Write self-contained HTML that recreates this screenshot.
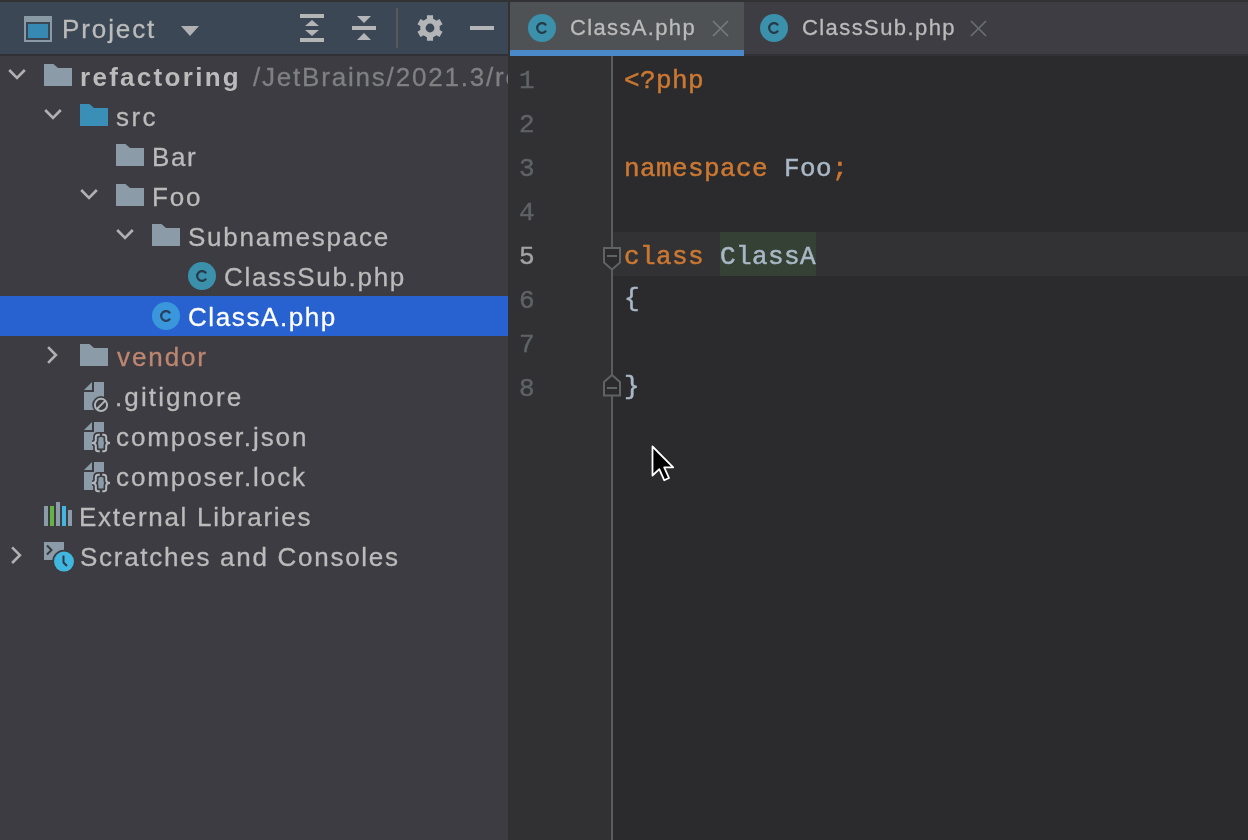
<!DOCTYPE html>
<html><head><meta charset="utf-8"><title>PhpStorm</title>
<style>
html,body{margin:0;padding:0;background:#2b2b2d;}
body{width:1248px;height:840px;position:relative;overflow:hidden;font-family:"Liberation Sans",sans-serif;}
.a,.t{position:absolute;}
.t{white-space:pre;will-change:transform;}
svg{position:absolute;overflow:visible;}
</style></head><body>

<div class="a" style="left:0;top:0;width:1248px;height:2px;background:#323234"></div>
<div class="a" style="left:0;top:2px;width:508px;height:52px;background:#3b4754"></div>
<div class="a" style="left:0;top:54px;width:508px;height:2px;background:#313135"></div>
<div class="a" style="left:0;top:56px;width:508px;height:784px;background:#3d3c42"></div>
<div class="a" style="left:508px;top:2px;width:2px;height:54px;background:#323235"></div>
<div class="a" style="left:510px;top:2px;width:738px;height:52px;background:#3e3d43"></div>
<div class="a" style="left:510px;top:54px;width:738px;height:2px;background:#323236"></div>
<div class="a" style="left:510px;top:2px;width:234px;height:48px;background:#4e5254"></div>
<div class="a" style="left:510px;top:50px;width:234px;height:6px;background:#4a88c7"></div>
<div class="a" style="left:508px;top:56px;width:103px;height:784px;background:#313134"></div>
<div class="a" style="left:613px;top:56px;width:635px;height:784px;background:#2b2b2d"></div>
<div class="a" style="left:613px;top:232px;width:635px;height:44px;background:#323234"></div>
<div class="a" style="left:720px;top:232px;width:96px;height:44px;background:#344134"></div>
<div class="a" style="left:611px;top:56px;width:2px;height:784px;background:#5a5d5e"></div>
<div class="a" style="left:0;top:296px;width:508px;height:40px;background:#2762d0"></div>
<svg style="left:0;top:0" width="508" height="56" viewBox="0 0 508 56">
<rect x="24" y="16" width="28" height="26" fill="#8a9aa5"/><rect x="26" y="22" width="24" height="18" fill="#3b4553"/><rect x="28" y="24" width="20" height="14" fill="#3689b3"/>
<path d="M181 26H199L190 36Z" fill="#afb1b3"/>
<g fill="#b4b5b6"><rect x="300" y="14" width="24" height="4"/><rect x="300" y="38" width="24" height="4"/><path d="M312 20L319 26H305Z"/><path d="M305 30H319L312 36Z"/>
<rect x="352" y="26" width="24" height="4"/><path d="M357 16H371L364 23Z"/><path d="M364 33L371 40H357Z"/>
<rect x="470" y="26" width="24" height="4"/></g>
<rect x="396" y="8" width="2" height="40" fill="#5b5954"/>
<circle cx="430" cy="28" r="9.7" fill="#b4b5b6"/><path d="M433.09 19.02L433.06 15.26L426.94 15.26L426.91 19.02L423.77 20.83L420.50 18.98L417.44 24.28L420.67 26.19L420.67 29.81L417.44 31.72L420.50 37.02L423.77 35.17L426.91 36.98L426.94 40.74L433.06 40.74L433.09 36.98L436.23 35.17L439.50 37.02L442.56 31.72L439.33 29.81L439.33 26.19L442.56 24.28L439.50 18.98L436.23 20.83ZM434.4 28A4.4 4.4 0 1 0 425.6 28A4.4 4.4 0 1 0 434.4 28Z" fill="#b4b5b6" fill-rule="evenodd"/><circle cx="430" cy="28" r="4.4" fill="#3b4754"/>
</svg>
<div class="t" style="left:61.67px;top:8.69px;font:26px/40px 'Liberation Sans',sans-serif;letter-spacing:1.901px;color:#bbbbbb;-webkit-text-stroke:0.3px #bbbbbb;">Project</div>
<svg style="left:0;top:0" width="508" height="840" viewBox="0 0 508 840">
<path d="M9.2 70L17 77.8L24.8 70" fill="none" stroke="#b0b1b3" stroke-width="2.6"/>
<path d="M44 86H72V68H58L53.5 64H44Z" fill="#8b9ba7"/>
<path d="M45.2 110L53 117.8L60.8 110" fill="none" stroke="#b0b1b3" stroke-width="2.6"/>
<path d="M80 126H108V108H94L89.5 104H80Z" fill="#3a8fb7"/>
<path d="M116 166H144V148H130L125.5 144H116Z" fill="#8b9ba7"/>
<path d="M81.2 190L89 197.8L96.8 190" fill="none" stroke="#b0b1b3" stroke-width="2.6"/>
<path d="M116 206H144V188H130L125.5 184H116Z" fill="#8b9ba7"/>
<path d="M117.2 230L125 237.8L132.8 230" fill="none" stroke="#b0b1b3" stroke-width="2.6"/>
<path d="M152 246H180V228H166L161.5 224H152Z" fill="#8b9ba7"/>
<circle cx="202" cy="276" r="14" fill="#3b90ab"/><path d="M206.07 273.36A4.85 4.85 0 1 0 206.07 278.64" fill="none" stroke="#263a46" stroke-width="2.2"/>
<circle cx="166" cy="316" r="14" fill="#3a97dc"/><path d="M170.07 313.36A4.85 4.85 0 1 0 170.07 318.64" fill="none" stroke="#27405c" stroke-width="2.2"/>
<path d="M48.1 347.2L55.900000000000006 355L48.1 362.8" fill="none" stroke="#b0b1b3" stroke-width="2.6"/>
<path d="M80 366H108V348H94L89.5 344H80Z" fill="#8b9ba7"/>
<path d="M92 382V390H84Z" fill="#8b9ba7"/><path d="M94 382H104V410H84V392H94Z" fill="#8b9ba7"/>
<circle cx="101" cy="404.9" r="8.8" fill="#3d3c42"/><circle cx="101" cy="404.9" r="6.1" fill="#39383e" stroke="#aeb5bb" stroke-width="2"/><path d="M96.7 409.2L105.3 400.6" stroke="#aeb5bb" stroke-width="2"/>
<path d="M92 422V430H84Z" fill="#8b9ba7"/><path d="M94 422H104V450H84V432H94Z" fill="#8b9ba7"/>
<rect x="99.3" y="432" width="3.4" height="5" fill="#3d3c42"/><rect x="99.3" y="448.5" width="3.4" height="2" fill="#3d3c42"/><g fill="none" stroke-linecap="butt"><path d="M99.8 434.7h-1.5q-2.5 0 -2.5 2.5v3q0 2.8 -3.8 2.8q3.8 0 3.8 2.8v3q0 2.5 2.5 2.5h1.5" stroke="#3d3c42" stroke-width="5.4"/><path d="M102.2 434.7h1.5q2.5 0 2.5 2.5v3q0 2.8 3.8 2.8q-3.8 0 -3.8 2.8v3q0 2.5 -2.5 2.5h-1.5" stroke="#3d3c42" stroke-width="5.4"/><path d="M99.8 434.7h-1.5q-2.5 0 -2.5 2.5v3q0 2.8 -3.8 2.8q3.8 0 3.8 2.8v3q0 2.5 2.5 2.5h1.5" stroke="#b0b8be" stroke-width="2"/><path d="M102.2 434.7h1.5q2.5 0 2.5 2.5v3q0 2.8 3.8 2.8q-3.8 0 -3.8 2.8v3q0 2.5 -2.5 2.5h-1.5" stroke="#b0b8be" stroke-width="2"/></g>
<path d="M92 462V470H84Z" fill="#8b9ba7"/><path d="M94 462H104V490H84V472H94Z" fill="#8b9ba7"/>
<rect x="99.3" y="472" width="3.4" height="5" fill="#3d3c42"/><rect x="99.3" y="488.5" width="3.4" height="2" fill="#3d3c42"/><g fill="none" stroke-linecap="butt"><path d="M99.8 474.7h-1.5q-2.5 0 -2.5 2.5v3q0 2.8 -3.8 2.8q3.8 0 3.8 2.8v3q0 2.5 2.5 2.5h1.5" stroke="#3d3c42" stroke-width="5.4"/><path d="M102.2 474.7h1.5q2.5 0 2.5 2.5v3q0 2.8 3.8 2.8q-3.8 0 -3.8 2.8v3q0 2.5 -2.5 2.5h-1.5" stroke="#3d3c42" stroke-width="5.4"/><path d="M99.8 474.7h-1.5q-2.5 0 -2.5 2.5v3q0 2.8 -3.8 2.8q3.8 0 3.8 2.8v3q0 2.5 2.5 2.5h1.5" stroke="#b0b8be" stroke-width="2"/><path d="M102.2 474.7h1.5q2.5 0 2.5 2.5v3q0 2.8 3.8 2.8q-3.8 0 -3.8 2.8v3q0 2.5 -2.5 2.5h-1.5" stroke="#b0b8be" stroke-width="2"/></g>
<rect x="44" y="506" width="4" height="20" fill="#8b9ba7"/>
<rect x="50" y="506" width="4" height="20" fill="#62b543"/>
<rect x="56" y="502" width="4" height="24" fill="#8b9ba7"/>
<rect x="62" y="506" width="4" height="20" fill="#40b6e0"/>
<rect x="68" y="510" width="4" height="16" fill="#8b9ba7"/>
<path d="M12.1 547.4000000000001L19.9 555.2L12.1 563.0" fill="none" stroke="#b0b1b3" stroke-width="2.6"/>
<rect x="44" y="542" width="20" height="18" fill="#8b9ba7"/><path d="M47 545.5L51.5 550L47 554.5" fill="none" stroke="#35393d" stroke-width="2"/>
<circle cx="64" cy="561.6" r="11.8" fill="#3d3c42"/><circle cx="64" cy="561.6" r="10" fill="#40b6e0"/><path d="M63.5 555.5V562.5L67 566" fill="none" stroke="#2d3a44" stroke-width="2"/>
</svg>
<div class="t" style="left:79.54px;top:56.79px;font:26px/40px 'Liberation Sans',sans-serif;font-weight:bold;letter-spacing:2.290px;color:#bbbbbb;-webkit-text-stroke:0px #bbbbbb;">refactoring</div>
<div class="a" style="left:0;top:56px;width:508px;height:40px;overflow:hidden"><div class="t" style="left:253.20px;top:0.79px;font:26px/40px 'Liberation Sans',sans-serif;letter-spacing:1.800px;color:#7e8083;-webkit-text-stroke:0.3px #7e8083;">/JetBrains/2021.3/refactoring</div></div>
<div class="t" style="left:116.28px;top:96.79px;font:26px/40px 'Liberation Sans',sans-serif;letter-spacing:2.475px;color:#bbbbbb;-webkit-text-stroke:0.3px #bbbbbb;">src</div>
<div class="t" style="left:151.62px;top:136.79px;font:26px/40px 'Liberation Sans',sans-serif;letter-spacing:1.577px;color:#bbbbbb;-webkit-text-stroke:0.3px #bbbbbb;">Bar</div>
<div class="t" style="left:151.57px;top:176.79px;font:26px/40px 'Liberation Sans',sans-serif;letter-spacing:1.861px;color:#bbbbbb;-webkit-text-stroke:0.3px #bbbbbb;">Foo</div>
<div class="t" style="left:187.82px;top:216.79px;font:26px/40px 'Liberation Sans',sans-serif;letter-spacing:1.769px;color:#bbbbbb;-webkit-text-stroke:0.3px #bbbbbb;">Subnamespace</div>
<div class="t" style="left:223.68px;top:256.79px;font:26px/40px 'Liberation Sans',sans-serif;letter-spacing:1.667px;color:#bbbbbb;-webkit-text-stroke:0.3px #bbbbbb;">ClassSub.php</div>
<div class="t" style="left:188.28px;top:296.79px;font:26px/40px 'Liberation Sans',sans-serif;letter-spacing:1.595px;color:#ffffff;-webkit-text-stroke:0.3px #ffffff;">ClassA.php</div>
<div class="t" style="left:116.91px;top:336.79px;font:26px/40px 'Liberation Sans',sans-serif;letter-spacing:1.904px;color:#be8670;-webkit-text-stroke:0.3px #be8670;">vendor</div>
<div class="t" style="left:115.33px;top:376.79px;font:26px/40px 'Liberation Sans',sans-serif;letter-spacing:2.130px;color:#bbbbbb;-webkit-text-stroke:0.3px #bbbbbb;">.gitignore</div>
<div class="t" style="left:115.90px;top:416.79px;font:26px/40px 'Liberation Sans',sans-serif;letter-spacing:1.893px;color:#bbbbbb;-webkit-text-stroke:0.3px #bbbbbb;">composer.json</div>
<div class="t" style="left:115.90px;top:456.79px;font:26px/40px 'Liberation Sans',sans-serif;letter-spacing:1.904px;color:#bbbbbb;-webkit-text-stroke:0.3px #bbbbbb;">composer.lock</div>
<div class="t" style="left:79.27px;top:496.79px;font:26px/40px 'Liberation Sans',sans-serif;letter-spacing:1.715px;color:#bbbbbb;-webkit-text-stroke:0.3px #bbbbbb;">External Libraries</div>
<div class="t" style="left:80.22px;top:536.79px;font:26px/40px 'Liberation Sans',sans-serif;letter-spacing:1.724px;color:#bbbbbb;-webkit-text-stroke:0.3px #bbbbbb;">Scratches and Consoles</div>
<svg style="left:510px;top:0" width="738" height="56" viewBox="510 0 738 56">
<circle cx="542" cy="28" r="14" fill="#3b90ab"/><path d="M546.07 25.36A4.85 4.85 0 1 0 546.07 30.64" fill="none" stroke="#263a46" stroke-width="2.2"/>
<circle cx="774" cy="28" r="14" fill="#3b90ab"/><path d="M778.07 25.36A4.85 4.85 0 1 0 778.07 30.64" fill="none" stroke="#263a46" stroke-width="2.2"/>
<path d="M713 21L728 36M728 21L713 36" stroke="#777b7e" stroke-width="1.6" fill="none"/>
<path d="M971 21L986 36M986 21L971 36" stroke="#6b6e73" stroke-width="1.6" fill="none"/>
</svg>
<div class="t" style="left:570.38px;top:8.07px;font:22px/40px 'Liberation Sans',sans-serif;letter-spacing:1.349px;color:#bbbbbb;-webkit-text-stroke:0.3px #bbbbbb;">ClassA.php</div>
<div class="t" style="left:801.88px;top:8.07px;font:22px/40px 'Liberation Sans',sans-serif;letter-spacing:1.415px;color:#bbbbbb;-webkit-text-stroke:0.3px #bbbbbb;">ClassSub.php</div>
<div class="t" style="left:624.20px;top:58.78px;font:26px/44px 'Liberation Mono',monospace;letter-spacing:0.40px;-webkit-text-stroke:0.5px currentColor"><span style="color:#cc7832">&lt;?php</span></div>
<div class="t" style="left:624.20px;top:146.78px;font:26px/44px 'Liberation Mono',monospace;letter-spacing:0.40px;-webkit-text-stroke:0.5px currentColor"><span style="color:#cc7832">namespace </span><span style="color:#a9b7c6">Foo</span><span style="color:#cc7832">;</span></div>
<div class="t" style="left:624.20px;top:234.78px;font:26px/44px 'Liberation Mono',monospace;letter-spacing:0.40px;-webkit-text-stroke:0.5px currentColor"><span style="color:#cc7832">class </span><span style="color:#a9b7c6">ClassA</span></div>
<div class="t" style="left:624.20px;top:278.78px;font:26px/44px 'Liberation Mono',monospace;letter-spacing:0.40px;-webkit-text-stroke:0.5px currentColor"><span style="color:#a9b7c6;position:relative;top:-2.4px">{</span></div>
<div class="t" style="left:624.20px;top:366.78px;font:26px/44px 'Liberation Mono',monospace;letter-spacing:0.40px;-webkit-text-stroke:0.5px currentColor"><span style="color:#a9b7c6;position:relative;top:-2.4px">}</span></div>
<div class="t" style="left:519.4px;top:58.78px;font:26px/44px 'Liberation Mono',monospace;color:#606366;-webkit-text-stroke:0.4px #606366">1</div>
<div class="t" style="left:519.4px;top:102.78px;font:26px/44px 'Liberation Mono',monospace;color:#606366;-webkit-text-stroke:0.4px #606366">2</div>
<div class="t" style="left:519.4px;top:146.78px;font:26px/44px 'Liberation Mono',monospace;color:#606366;-webkit-text-stroke:0.4px #606366">3</div>
<div class="t" style="left:519.4px;top:190.78px;font:26px/44px 'Liberation Mono',monospace;color:#606366;-webkit-text-stroke:0.4px #606366">4</div>
<div class="t" style="left:519.4px;top:234.78px;font:26px/44px 'Liberation Mono',monospace;color:#a4a3a3;-webkit-text-stroke:0.4px #a4a3a3">5</div>
<div class="t" style="left:519.4px;top:278.78px;font:26px/44px 'Liberation Mono',monospace;color:#606366;-webkit-text-stroke:0.4px #606366">6</div>
<div class="t" style="left:519.4px;top:322.78px;font:26px/44px 'Liberation Mono',monospace;color:#606366;-webkit-text-stroke:0.4px #606366">7</div>
<div class="t" style="left:519.4px;top:366.78px;font:26px/44px 'Liberation Mono',monospace;color:#606366;-webkit-text-stroke:0.4px #606366">8</div>
<svg style="left:508px;top:56px" width="740" height="784" viewBox="508 56 740 784">
<path d="M604 248H620V262.5L612 269.5L604 262.5Z" fill="#2b2b2d" stroke="#606364" stroke-width="2"/><rect x="607" y="255" width="10" height="2" fill="#606364"/>
<path d="M604 395.5H620V382L612 375L604 382Z" fill="#2b2b2d" stroke="#606364" stroke-width="2"/><rect x="607" y="387" width="10" height="2" fill="#606364"/>
<path d="M652.5 446.5V475.5L659.3 469.2L664.2 480.2L669 478L664.2 467.3H673.2Z" fill="#000" stroke="#fff" stroke-width="1.8" stroke-linejoin="round"/>
</svg>
</body></html>
